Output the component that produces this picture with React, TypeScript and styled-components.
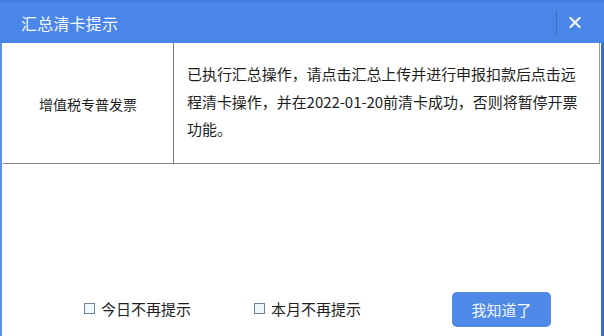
import React from "react";
import styled, { createGlobalStyle } from "styled-components";

const Global = createGlobalStyle`
  html, body { margin: 0; padding: 0; background: #ffffff; }
  body { font-family: "Noto Sans CJK SC", "Noto Sans", sans-serif; }
  * { box-sizing: border-box; }
`;

const Window = styled.div`
  width: 604px;
  height: 336px;
  display: flex;
  flex-direction: column;
  background: #ffffff;
  overflow: hidden;
`;

const TitleBar = styled.div`
  height: 43px;
  flex: none;
  display: flex;
  align-items: center;
  background: #4a86e8;
  border-top: 2px solid #3f7ede;
  padding-left: 21px;
  color: #f4f8ff;
  font-size: 16px;
`;

const Title = styled.span`
  flex: 1;
  letter-spacing: 0.2px;
`;

const Separator = styled.div`
  width: 1px;
  height: 26px;
  background: #3a70c8;
  margin-right: 6px;
`;

const CloseButton = styled.div`
  width: 24px;
  height: 24px;
  display: flex;
  align-items: center;
  justify-content: center;
  margin-right: 17px;
`;

const Body = styled.div`
  flex: 1;
  display: flex;
  flex-direction: column;
  border-left: 2px solid #5b92df;
  border-right: 3px solid #3c6fc0;
`;

const Table = styled.div`
  display: grid;
  grid-template-columns: 171px 1fr;
  height: 121px;
  border-bottom: 1px solid #858585;
  margin-left: 1px;
  margin-right: 1px;
  border-right: 1px solid #9a9a9a;
`;

const LabelCell = styled.div`
  display: flex;
  align-items: center;
  justify-content: center;
  border-right: 1px solid #7a7a7a;
  font-size: 14px;
  color: #1e1e1e;
  padding-top: 1px;
`;

const MessageCell = styled.div`
  padding: 17px 14px 0 13px;
  font-size: 15px;
  line-height: 27.5px;
  color: #1e1e1e;
  letter-spacing: -0.05px;
`;

const Spacer = styled.div`
  flex: 1;
`;

const Footer = styled.div`
  display: flex;
  align-items: center;
  padding-left: 82px;
  padding-bottom: 9px;
  gap: 63px;
`;

const CheckItem = styled.label`
  display: flex;
  align-items: center;
  gap: 6px;
  font-size: 15px;
  color: #1e1e1e;
  margin-top: -2px;
`;

const Box = styled.span`
  width: 11px;
  height: 11px;
  border: 1px solid #6f8295;
  background: #eef8fb;
  display: inline-block;
`;

const ActionButton = styled.button`
  margin-left: auto;
  margin-right: 50px;
  width: 99px;
  height: 35px;
  border: none;
  border-radius: 5px;
  background: #4f8ae9;
  color: #f4f8ff;
  font-family: inherit;
  font-size: 15px;
  padding: 0;
`;

export default function App() {
  return (
    <>
      <Global />
      <Window>
        <TitleBar>
          <Title>汇总清卡提示</Title>
          <Separator />
          <CloseButton>
            <svg width="12" height="11" viewBox="0 0 12 11">
              <path d="M1.5 1 L10.5 10 M10.5 1 L1.5 10" stroke="#eef3fb" strokeWidth="2.2" strokeLinecap="square" />
            </svg>
          </CloseButton>
        </TitleBar>
        <Body>
          <Table>
            <LabelCell>增值税专普发票</LabelCell>
            <MessageCell>
              已执行汇总操作，请点击汇总上传并进行申报扣款后点击远程清卡操作，并在2022-01-20前清卡成功，否则将暂停开票功能。
            </MessageCell>
          </Table>
          <Spacer />
          <Footer>
            <CheckItem>
              <Box />
              今日不再提示
            </CheckItem>
            <CheckItem>
              <Box />
              本月不再提示
            </CheckItem>
            <ActionButton>我知道了</ActionButton>
          </Footer>
        </Body>
      </Window>
    </>
  );
}
